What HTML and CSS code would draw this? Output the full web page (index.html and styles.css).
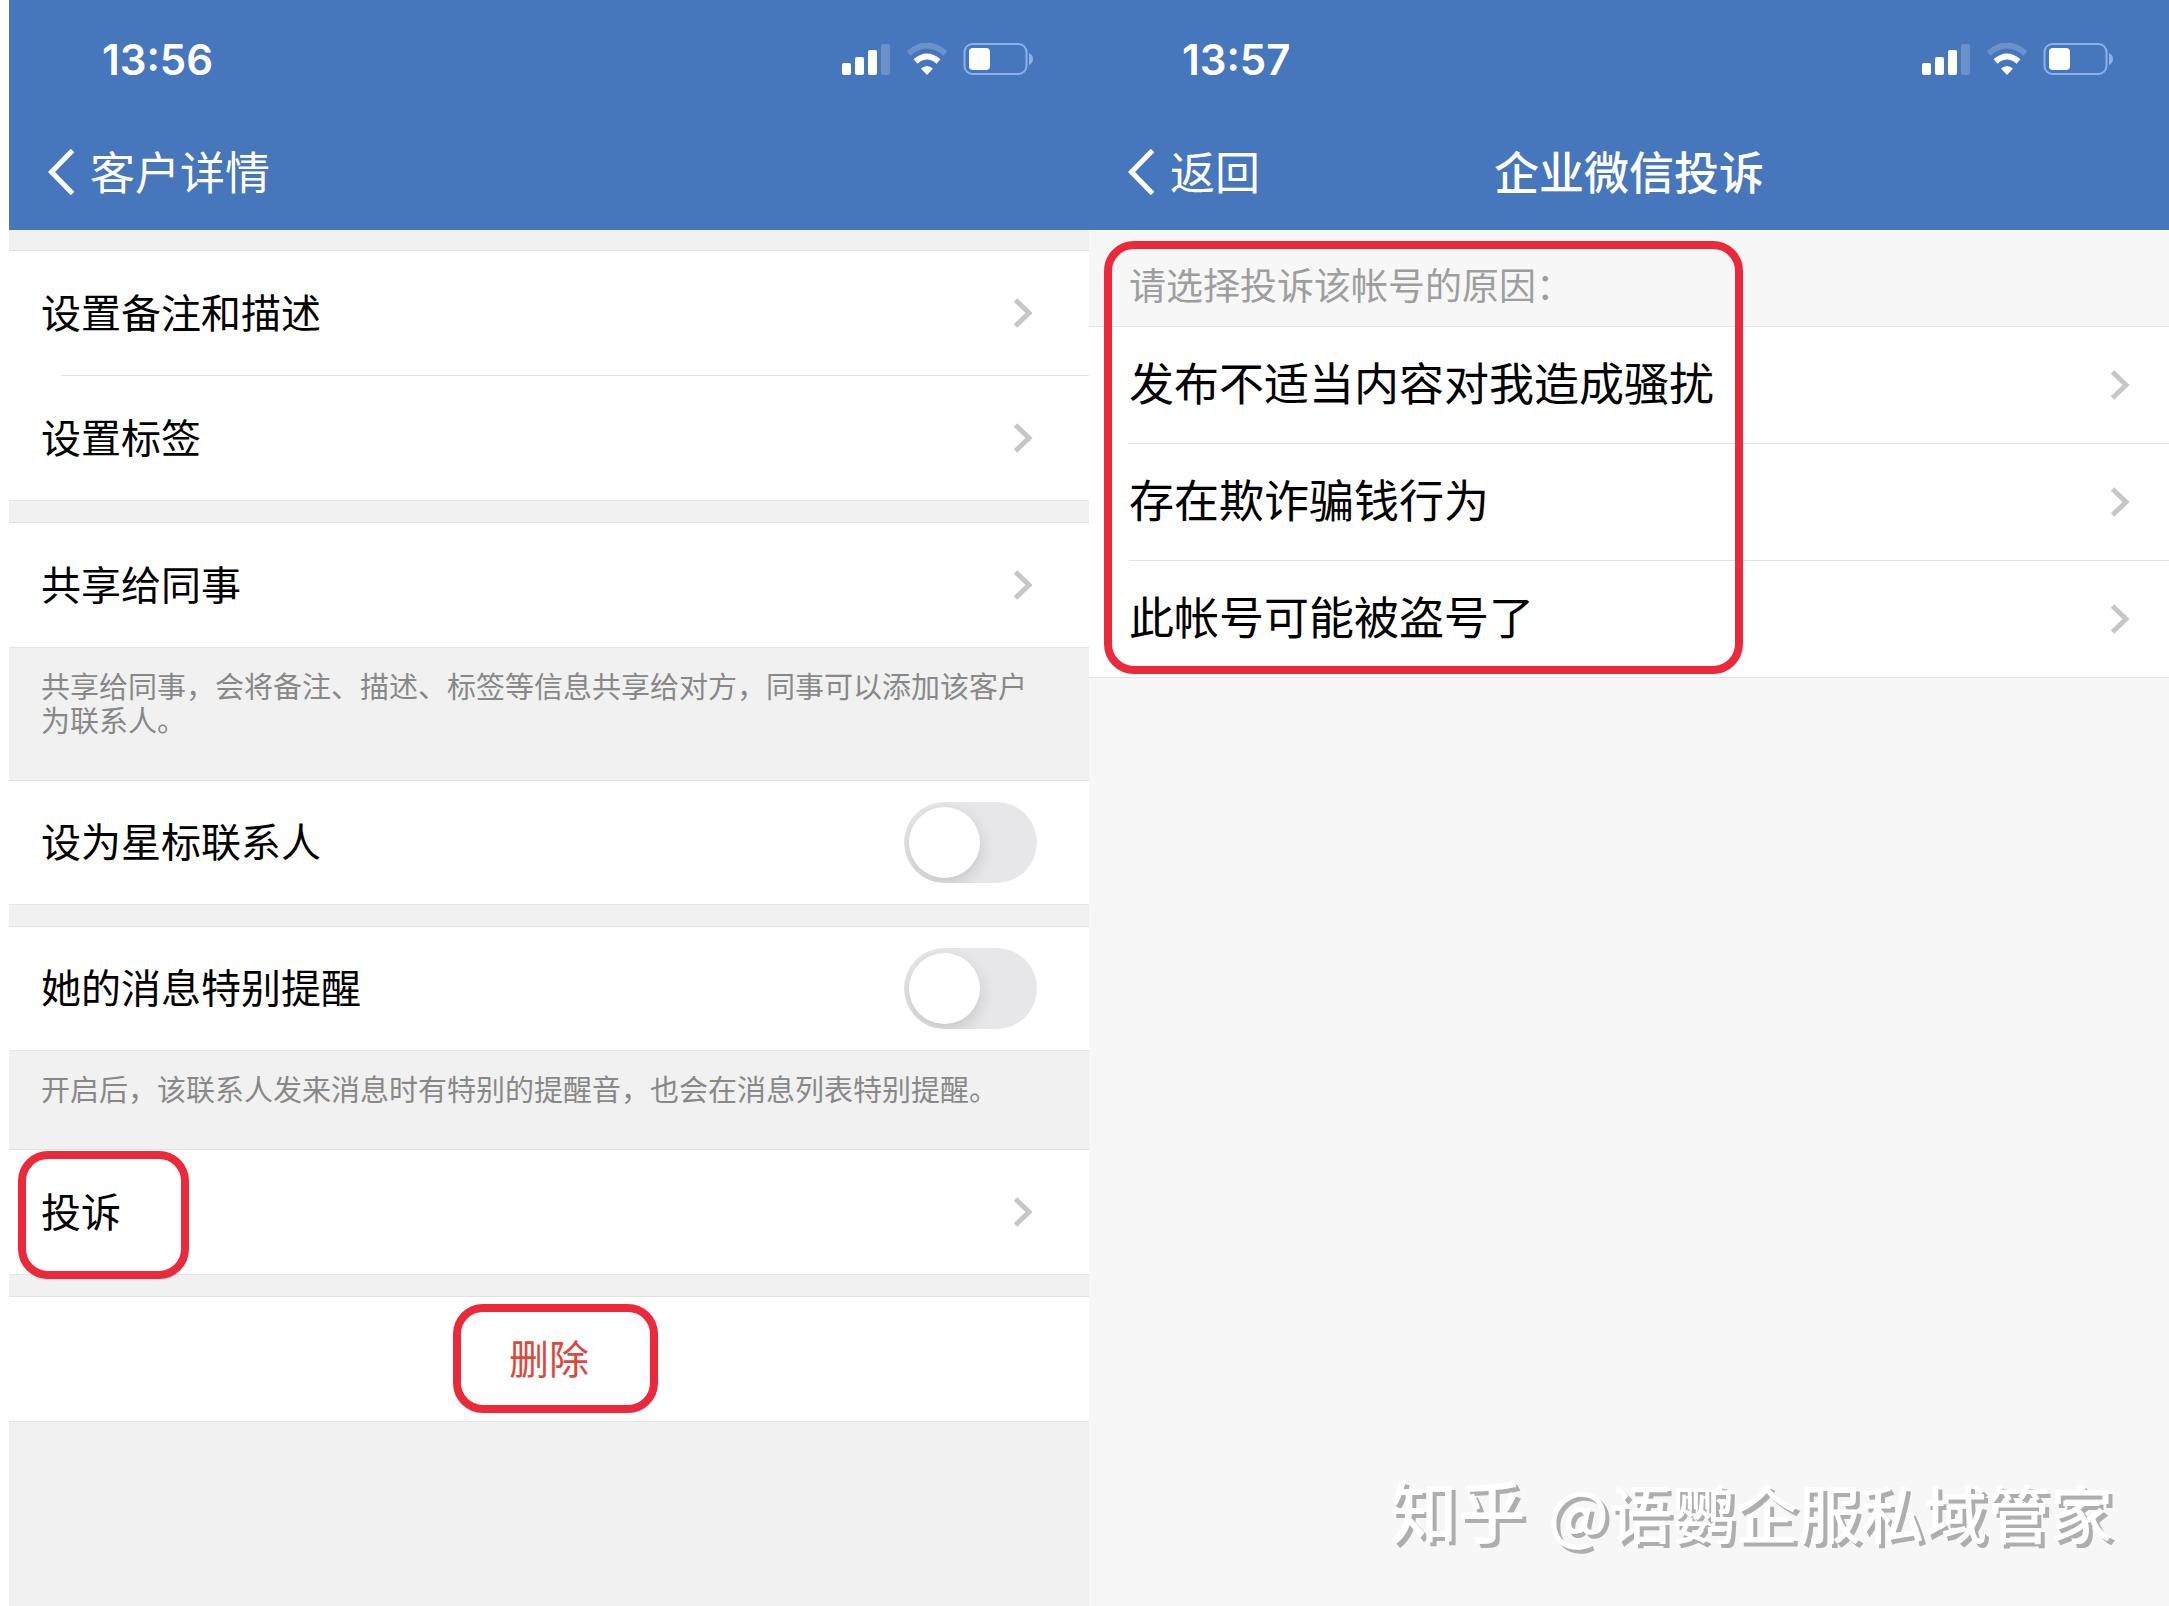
FILE: index.html
```html
<!DOCTYPE html>
<html lang="zh-CN">
<head>
    <meta charset="UTF-8">
    <meta name="viewport" content="width=device-width, initial-scale=1.0">
    <title>企业微信投诉</title>
    <link rel="stylesheet" href="styles.css">
</head>
<body>
    <svg class="simbolos" width="0" height="0">
        <symbol id="status" viewBox="0 0 191 32">
            <g fill="#fff">
                <rect x="0" y="20" width="9" height="12" rx="2"/>
                <rect x="13" y="14" width="9" height="18" rx="2"/>
                <rect x="26" y="7" width="9" height="25" rx="2"/>
                <rect x="39" y="1" width="9" height="31" rx="2" opacity=".2"/>
                <path d="M85 32L79 25.500Q85 20.500 91 25.500Z"/>
            </g>
            <path d="M66.500 10.500Q85 -5.500 103.500 10.500" fill="none" stroke="#fff" stroke-width="6" opacity=".2"/>
            <path d="M73.500 18.500Q85 8.500 96.500 18.500" fill="none" stroke="#fff" stroke-width="6"/>
            <rect x="122.500" y="1" width="62" height="30" rx="8" fill="none" stroke="#8fb1ea" stroke-width="2"/>
            <rect x="127" y="5" width="21" height="22" rx="4" fill="#fff"/>
            <path d="M187 10Q191 12 191 16T187 22Z" fill="#8fb1ea"/>
        </symbol>
        <symbol id="voltar" viewBox="0 0 27 46">
            <path d="M24.500 1.500L3.500 23L24.500 44.500" fill="none" stroke="#fff" stroke-width="5"/>
        </symbol>
        <symbol id="seta" viewBox="0 0 20 30">
            <path d="M2.500 2L16 15L2.500 28" fill="none" stroke="#c7c7c7" stroke-width="5"/>
        </symbol>
    </svg>

    <main class="telas">
        <section class="tela detalhes">
            <header class="topo">
                <div class="status">
                    <span class="hora">13:56</span>
                    <svg class="icones"><use href="#status"/></svg>
                </div>
                <nav class="barra">
                    <a href="#" class="voltar"><svg><use href="#voltar"/></svg><span>客户详情</span></a>
                </nav>
            </header>

            <ul class="grupo">
                <li><a href="#" class="linha"><span>设置备注和描述</span><svg class="seta"><use href="#seta"/></svg></a></li>
                <li><a href="#" class="linha"><span>设置标签</span><svg class="seta"><use href="#seta"/></svg></a></li>
            </ul>
            <ul class="grupo">
                <li><a href="#" class="linha"><span>共享给同事</span><svg class="seta"><use href="#seta"/></svg></a></li>
            </ul>
            <p class="nota">共享给同事，会将备注、描述、标签等信息共享给对方，同事可以添加该客户为联系人。</p>
            <ul class="grupo">
                <li class="linha">
                    <label for="estrela">设为星标联系人</label>
                    <input type="checkbox" id="estrela" class="chave">
                </li>
            </ul>
            <ul class="grupo">
                <li class="linha">
                    <label for="aviso">她的消息特别提醒</label>
                    <input type="checkbox" id="aviso" class="chave">
                </li>
            </ul>
            <p class="nota">开启后，该联系人发来消息时有特别的提醒音，也会在消息列表特别提醒。</p>
            <ul class="grupo">
                <li>
                    <a href="#" class="linha"><span>投诉</span><svg class="seta"><use href="#seta"/></svg></a>
                    <span class="marca marca-denuncia"></span>
                </li>
            </ul>
            <ul class="grupo">
                <li>
                    <button type="button" class="linha apagar"><span>删除</span></button>
                    <span class="marca marca-apagar"></span>
                </li>
            </ul>
        </section>

        <section class="tela denuncia">
            <header class="topo">
                <div class="status">
                    <span class="hora">13:57</span>
                    <svg class="icones"><use href="#status"/></svg>
                </div>
                <nav class="barra">
                    <a href="#" class="voltar"><svg><use href="#voltar"/></svg><span>返回</span></a>
                    <h1>企业微信投诉</h1>
                </nav>
            </header>

            <div class="motivos">
                <p class="pergunta">请选择投诉该帐号的原因：</p>
                <ul>
                    <li><a href="#"><span>发布不适当内容对我造成骚扰</span><svg class="seta"><use href="#seta"/></svg></a></li>
                    <li><a href="#"><span>存在欺诈骗钱行为</span><svg class="seta"><use href="#seta"/></svg></a></li>
                    <li><a href="#"><span>此帐号可能被盗号了</span><svg class="seta"><use href="#seta"/></svg></a></li>
                </ul>
                <span class="marca marca-motivos"></span>
            </div>
            <p class="autor"><span>知乎</span> @语鹦企服私域管家</p>
        </section>
    </main>
</body>
</html>
```

FILE: styles.css
```css
* {
    box-sizing: border-box;
}
body {
    margin: 0;
    background-color: white;
    color: black;
    font: 40px "Noto Sans CJK SC", sans-serif;
}
h1, p, ul {
    margin: 0;
    padding: 0;
}
ul {
    list-style: none;
}
a {
    color: inherit;
    text-decoration: none;
}
.simbolos {
    position: absolute;
}
.telas {
    display: flex;
    min-height: 100vh;
    padding-left: 9px;
}
.tela {
    position: relative;
    flex: 1;
}
.detalhes {
    background-color: rgb(241, 241, 241);
}
.denuncia {
    background-color: rgb(247, 247, 247);
}

/* topo azul */
.topo {
    padding-bottom: 4px;
    color: white;
    background-color: rgb(70, 118, 188);
}
.status {
    display: flex;
    align-items: center;
    justify-content: space-between;
    height: 118px;
    padding: 0 56px 0 93px;
}
.hora {
    font: 600 42px Inter, sans-serif;
}
.icones {
    width: 191px;
    height: 32px;
}
.barra {
    display: grid;
    grid-template-columns: 1fr auto 1fr;
    align-items: center;
    height: 108px;
    padding: 0 39px;
    font-size: 45px;
    line-height: 60px;
}
.voltar {
    display: flex;
    align-items: center;
    gap: 15px;
}
.voltar svg {
    width: 27px;
    height: 46px;
}
.voltar span, .barra h1 {
    padding-bottom: 3px;
}
.barra h1 {
    font-size: 45px;
    font-weight: 500;
}

/* lista da esquerda */
.grupo {
    margin-top: 21px;
    background-color: white;
    border-top: 1px solid rgb(226, 226, 226);
}
.topo + .grupo {
    margin-top: 20px;
}
.nota + .grupo {
    margin-top: 0;
}
.grupo li {
    position: relative;
    border-bottom: 1px solid rgb(230, 230, 230);
}
.grupo li:not(:last-child) {
    border-bottom-color: white;
}
.grupo li:not(:last-child)::after {
    content: "";
    position: absolute;
    left: 52px;
    right: 0;
    bottom: -1px;
    height: 1px;
    background-color: rgb(226, 226, 226);
}
.linha {
    display: flex;
    align-items: center;
    justify-content: space-between;
    width: 100%;
    height: 124px;
    padding: 0 52px 0 32px;
}
.linha span, .linha label {
    padding-bottom: 5px;
}
.seta {
    width: 20px;
    height: 30px;
}
.linha .seta {
    margin-right: 4px;
}
.nota {
    padding: 20px 42px 44px 32px;
    color: rgb(136, 136, 136);
    font-size: 29px;
    line-height: 34px;
}
.chave {
    appearance: none;
    width: 133px;
    height: 81px;
    margin: 0;
    padding: 5px;
    border-radius: 41px;
    background-color: rgb(231, 231, 233);
    overflow: hidden;
}
.chave::before {
    content: "";
    display: block;
    width: 71px;
    height: 71px;
    border-radius: 50%;
    background-color: white;
    box-shadow: 0 6px 16px rgba(0, 0, 0, 0.15);
}
.chave:checked {
    background-color: rgb(70, 118, 188);
}
.chave:checked::before {
    margin-left: auto;
}
.apagar {
    justify-content: center;
    padding: 0;
    border: none;
    background: none;
    color: rgb(220, 72, 60);
    font: inherit;
}

/* motivos da denuncia */
.pergunta {
    padding: 34px 40px 22px;
    color: rgb(158, 158, 158);
    font-size: 37px;
    line-height: 40px;
    border-bottom: 1px solid rgb(226, 226, 226);
}
.motivos {
    position: relative;
}
.motivos ul {
    padding-left: 40px;
    background-color: white;
    border-bottom: 1px solid rgb(226, 226, 226);
}
.motivos li + li {
    border-top: 1px solid rgb(226, 226, 226);
}
.motivos a {
    display: flex;
    align-items: center;
    justify-content: space-between;
    height: 116px;
    padding-right: 39px;
    font-size: 45px;
}
.motivos a span {
    padding-bottom: 8px;
}

/* marcas vermelhas por cima */
.marca {
    position: absolute;
    border: 8px solid rgb(236, 41, 59);
    border-radius: 30px;
    pointer-events: none;
}
.marca-denuncia {
    left: 9px;
    top: 1px;
    width: 171px;
    height: 128px;
    z-index: 1;
}
.marca-apagar {
    left: calc(50% - 96px);
    top: 7px;
    width: 205px;
    height: 109px;
}
.marca-motivos {
    left: 15px;
    top: 11px;
    width: 639px;
    height: 433px;
}
.autor {
    position: absolute;
    right: 56px;
    bottom: 50px;
    color: white;
    font-size: 63px;
    font-weight: 500;
    line-height: 90px;
    white-space: nowrap;
    text-shadow: 4px 4px 0 rgb(174, 174, 174);
}
.autor span {
    margin-right: 8px;
    font-size: 68px;
}
```
